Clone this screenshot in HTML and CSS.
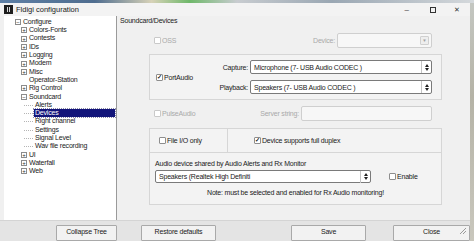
FILE: index.html
```html
<!DOCTYPE html>
<html lang="en">
<head>
  <meta charset="UTF-8" />
  <title>Fldigi configuration</title>
  <link rel="stylesheet" href="styles.css">
</head>
<body>
  <div class="desktop-strip"></div>
  <div class="window">
    <div class="titlebar">
      <span class="app-icon"><i></i><i></i></span>
      <span class="title">Fldigi configuration</span>
      <div class="controls">
        <span class="ctl">&#8211;</span>
        <span class="ctl max"></span>
        <span class="ctl close">&#10005;</span>
      </div>
    </div>

    <div class="main">
      <ul class="tree">
        <li class="lvl0"><span class="exp">&minus;</span>Configure</li>
        <li class="lvl1"><span class="exp">+</span>Colors-Fonts</li>
        <li class="lvl1"><span class="exp">+</span>Contests</li>
        <li class="lvl1"><span class="exp">+</span>IDs</li>
        <li class="lvl1"><span class="exp">+</span>Logging</li>
        <li class="lvl1"><span class="exp">+</span>Modem</li>
        <li class="lvl1"><span class="exp">+</span>Misc</li>
        <li class="lvl1 leaf">Operator-Station</li>
        <li class="lvl1"><span class="exp">+</span>Rig Control</li>
        <li class="lvl1"><span class="exp">&minus;</span>Soundcard</li>
        <li class="lvl2">Alerts</li>
        <li class="lvl2 selected"><span>Devices</span></li>
        <li class="lvl2">Right channel</li>
        <li class="lvl2">Settings</li>
        <li class="lvl2">Signal Level</li>
        <li class="lvl2">Wav file recording</li>
        <li class="lvl1"><span class="exp">+</span>UI</li>
        <li class="lvl1"><span class="exp">+</span>Waterfall</li>
        <li class="lvl1"><span class="exp">+</span>Web</li>
      </ul>

      <div class="content">
        <div class="crumb">Soundcard/Devices</div>
        <div class="panel">
          <div class="row plain">
            <label class="check disabled"><span class="box"></span>OSS</label>
            <div class="field">
              <span class="lbl disabled">Device:</span>
              <span class="combo disabled dev"><span class="arrow">&#9660;</span></span>
            </div>
          </div>

          <div class="group portaudio">
            <label class="check"><span class="box on">&#10003;</span>PortAudio</label>
            <div class="pa-grid">
              <span class="lbl">Capture:</span>
              <span class="choice">Microphone (7- USB Audio CODEC )<span class="spin"><svg width="4" height="7" viewBox="0 0 4 7"><path d="M0 3 L2 0 L4 3 Z M0 4 L2 7 L4 4 Z" fill="#222"/></svg></span></span>
              <span class="lbl">Playback:</span>
              <span class="choice">Speakers (7- USB Audio CODEC )<span class="spin"><svg width="4" height="7" viewBox="0 0 4 7"><path d="M0 3 L2 0 L4 3 Z M0 4 L2 7 L4 4 Z" fill="#222"/></svg></span></span>
            </div>
          </div>

          <div class="row plain pulse">
            <label class="check disabled"><span class="box"></span>PulseAudio</label>
            <div class="field">
              <span class="lbl disabled">Server string:</span>
              <span class="combo disabled server"></span>
            </div>
          </div>

          <div class="split">
            <div class="group fileio">
              <label class="check"><span class="box"></span>File I/O only</label>
            </div>
            <div class="group duplex">
              <label class="check"><span class="box on">&#10003;</span>Device supports full duplex</label>
            </div>
          </div>

          <div class="group shared">
            <div class="shared-title">Audio device shared by Audio Alerts and Rx Monitor</div>
            <div class="shared-row">
              <span class="choice wide">Speakers (Realtek High Definiti<span class="spin"><svg width="4" height="7" viewBox="0 0 4 7"><path d="M0 3 L2 0 L4 3 Z M0 4 L2 7 L4 4 Z" fill="#222"/></svg></span></span>
              <label class="check"><span class="box"></span>Enable</label>
            </div>
            <div class="note">Note: must be selected and enabled for Rx Audio monitoring!</div>
          </div>
        </div>
      </div>
    </div>

    <div class="footer">
      <button class="btn collapse">Collapse Tree</button>
      <button class="btn restore">Restore defaults</button>
      <button class="btn save">Save</button>
      <button class="btn close-btn">Close<span class="grip"></span></button>
    </div>
  </div>
</body>
</html>
```

FILE: styles.css
```css
* {
  margin: 0;
  padding: 0;
  box-sizing: border-box;
}

body {
  width: 474px;
  height: 241px;
  overflow: hidden;
  font-family: 'Liberation Sans', Arial, sans-serif;
  font-size: 7px;
  letter-spacing: -0.2px;
  color: #1a1a1a;
  background: linear-gradient(180deg, #c4c7c2, #b5b3a6 40%, #c9c7bd);
}

.desktop-strip {
  height: 3px;
  background: linear-gradient(90deg, #5d7fa5 0%, #4f6d8f 20%, #d7d2b8 32%, #6fb86a 40%, #c8ccd0 50%, #9aa7b3 70%, #d5d9dc 100%);
}

.window {
  width: 470px;
  height: 238px;
  background: #f0f0f0;
  display: flex;
  flex-direction: column;
}

/* title bar */
.titlebar {
  height: 17px;
  display: flex;
  align-items: center;
  background: #f3f3f3;
}

.app-icon {
  width: 9px;
  height: 9px;
  margin-left: 4px;
  margin-right: 3px;
  background: #1e1e1e;
  display: flex;
  justify-content: center;
  align-items: center;
  gap: 1px;
}

.app-icon i {
  width: 1px;
  height: 5px;
  background: #d9d9d9;
}

.title {
  font-size: 7.5px;
  letter-spacing: 0;
  color: #1a1a1a;
}

.controls {
  margin-left: auto;
  display: flex;
  align-items: center;
}

.ctl {
  width: 27px;
  text-align: center;
  font-size: 8px;
  color: #333;
}

.ctl.max {
  width: 6px;
  height: 6px;
  border: 1px solid #333;
  margin: 0 10px;
}

.ctl.close {
  font-size: 7px;
  margin-right: 2px;
  width: 22px;
}

/* main area */
.main {
  display: flex;
  height: 204px;
}

.tree {
  list-style: none;
  width: 113px;
  height: 205px;
  margin-left: 4px;
  background: #fff;
  border-right: 1px solid #9a9a9a;
  padding-top: 1.9px;
}

.tree li {
  height: 8.3px;
  line-height: 8.3px;
  display: flex;
  align-items: center;
  white-space: nowrap;
}

.exp {
  width: 6px;
  height: 6px;
  border: 1px solid #8c8c8c;
  font-size: 6px;
  letter-spacing: 0;
  line-height: 4px;
  text-align: center;
  margin-right: 2px;
  color: #333;
  background: #fff;
}

.lvl0 {
  padding-left: 11px;
}

.lvl1 {
  padding-left: 17px;
}

.lvl1.leaf {
  padding-left: 25px;
}

.lvl2 {
  padding-left: 31px;
  position: relative;
}

.lvl2::before {
  content: "";
  position: absolute;
  left: 20px;
  top: 4px;
  width: 9px;
  border-top: 1px dotted #b5b5b5;
}

.lvl2.selected {
  padding-left: 30px;
}

.lvl2.selected span {
  flex: 1;
  background: #13157a;
  color: #fff;
  padding-left: 1px;
  margin-right: 1px;
  outline: 1px dotted #8a8aa8;
}

/* content */
.content {
  flex: 1;
  display: flex;
  flex-direction: column;
}

.crumb {
  padding: 1px 0 0 3px;
  height: 10px;
  line-height: 7px;
}

.panel {
  margin: 7px 0 0 32px;
  width: 293px;
  display: flex;
  flex-direction: column;
}

.row {
  display: flex;
  align-items: center;
  justify-content: space-between;
  height: 15px;
  padding: 0 10px 0 5px;
}

.check {
  display: flex;
  align-items: center;
  white-space: nowrap;
}

.box {
  width: 7px;
  height: 7px;
  border: 1px solid #8e8e8e;
  background: #fff;
  border-radius: 1px;
  margin-right: 1px;
  font-size: 5.5px;
  letter-spacing: 0;
  line-height: 5px;
  text-align: center;
  color: #111;
  font-weight: bold;
}

.disabled {
  color: #a9a9a9;
}

.check.disabled .box {
  border-color: #c9c9c9;
}

.field {
  display: flex;
  align-items: center;
  gap: 2px;
}

.combo {
  height: 15px;
  border: 1px solid #cfcfcf;
  border-radius: 2px;
  background: #f7f7f7;
  display: flex;
  justify-content: flex-end;
  align-items: center;
}

.combo.dev {
  width: 95px;
}

.combo.server {
  width: 131px;
}

.arrow {
  width: 9px;
  height: 9px;
  margin-right: 2px;
  border: 1px solid #d0d0d0;
  border-radius: 1px;
  font-size: 4.5px;
  letter-spacing: 0;
  line-height: 7px;
  text-align: center;
  color: #a0a0a0;
  background: #eeeeee;
}

.group {
  border: 1px solid #d6d6d6;
  background: #f3f3f3;
}

.portaudio {
  margin-top: 6px;
  height: 46px;
  display: flex;
  align-items: center;
  justify-content: space-between;
  padding: 0 9px 0 6px;
}

.pa-grid {
  display: grid;
  grid-template-columns: auto 182px;
  row-gap: 6px;
  column-gap: 2px;
  align-items: center;
}

.lbl {
  text-align: right;
  white-space: nowrap;
}

.choice {
  height: 14px;
  border: 1px solid #7a7a7a;
  border-radius: 2px;
  background: #fff;
  display: flex;
  align-items: center;
  padding-left: 3px;
  white-space: nowrap;
}

.spin {
  margin-left: auto;
  width: 10px;
  height: 12px;
  border-left: 1px solid #c4c4c4;
  display: flex;
  align-items: center;
  justify-content: center;
}

.pulse {
  margin-top: 6px;
}

.split {
  margin-top: 7px;
  display: flex;
  height: 25px;
}

.fileio {
  width: 79px;
  display: flex;
  align-items: center;
  padding-left: 9px;
}

.duplex {
  flex: 1;
  border-left: none;
  display: flex;
  align-items: center;
  padding-left: 26px;
}

.shared {
  border-top: none;
  height: 52px;
  padding: 7px 0 0 5px;
}

.shared-title {
  line-height: 8px;
  height: 10px;
}

.shared-row {
  display: flex;
  align-items: center;
}

.choice.wide {
  width: 216px;
  height: 13px;
}

.shared-row .check {
  margin-left: 18px;
}

.note {
  text-align: center;
  margin-top: 6px;
  padding-right: 5px;
}

/* footer buttons */
.footer {
  flex: 1;
  background: #e4e4e4;
  border-top: 1px solid #d4d4d4;
  display: flex;
  align-items: flex-start;
  padding: 4px 0 0 56px;
}

.btn {
  height: 16px;
  font-family: 'Liberation Sans', Arial, sans-serif;
  font-size: 7px;
  letter-spacing: -0.2px;
  color: #1a1a1a;
  background: #f2f2f2;
  border: 1px solid #a9a9a9;
  border-radius: 1px;
  position: relative;
  padding-bottom: 3px;
}

.collapse {
  width: 61px;
}

.restore {
  width: 75px;
  margin-left: 24px;
}

.save {
  width: 75px;
  margin-left: 75px;
}

.close-btn {
  width: 77px;
  margin-left: 27px;
}

.grip {
  position: absolute;
  right: 3px;
  top: 2px;
  width: 6px;
  height: 6px;
  background: linear-gradient(135deg, transparent 45%, #9a9a9a 45%, #9a9a9a 55%, transparent 55%, transparent 70%, #9a9a9a 70%, #9a9a9a 80%, transparent 80%);
}
```
